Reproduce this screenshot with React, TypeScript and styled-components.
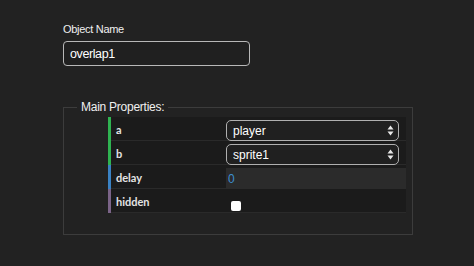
import React from 'react';
import styled, { createGlobalStyle } from 'styled-components';

const GlobalStyle = createGlobalStyle`
  html, body {
    margin: 0;
    padding: 0;
    background: #222222;
  }
  body {
    font-family: 'Liberation Sans', Arial, sans-serif;
    color: #eeeeee;
  }
`;

const Page = styled.div`
  width: 474px;
  height: 266px;
  box-sizing: border-box;
  padding: 22px 0 0 63px;
  background: #222222;
  overflow: hidden;
`;

const FieldLabel = styled.div`
  font-size: 11px;
  line-height: 15px;
  letter-spacing: -0.3px;
  color: #f0f0f0;
  margin-bottom: 4px;
`;

const NameInput = styled.input`
  display: block;
  box-sizing: border-box;
  width: 187px;
  height: 25px;
  margin: 0;
  padding: 0 6px;
  border: 1px solid #b8b8b8;
  border-radius: 4px;
  background: #202020;
  color: #ffffff;
  font-family: 'Liberation Sans', Arial, sans-serif;
  font-size: 12.5px;
  letter-spacing: -0.4px;
  outline: none;
`;

const Group = styled.fieldset`
  box-sizing: border-box;
  width: 350px;
  margin: 33px 0 0 0;
  padding: 2px 6px 21px 13px;
  border: 1px solid #3c3c3c;
`;

const Legend = styled.legend`
  padding: 0 4px;
  font-size: 12px;
  line-height: 16px;
  letter-spacing: -0.25px;
  color: #f0f0f0;
`;

const Rows = styled.div`
  display: flex;
  flex-direction: column;
  margin-left: 31px;
`;

const Row = styled.div<{ $accent: string }>`
  display: grid;
  grid-template-columns: 115px 1fr;
  align-items: center;
  height: 24px;
  box-sizing: border-box;
  border-left: 3px solid ${({ $accent }) => $accent};
  background:
    linear-gradient(to top, #2a2a2a 0, #2a2a2a 1px, transparent 1px),
    #1b1b1b;
`;

const RowLabel = styled.div`
  padding-left: 5px;
  font-family: Lato, 'Open Sans', sans-serif;
  font-weight: 700;
  font-size: 11px;
  color: #e4e4e4;
`;

const SelectWrap = styled.div`
  position: relative;
  align-self: end;
  width: 173px;
  height: 21px;
`;

const Select = styled.select`
  appearance: none;
  -webkit-appearance: none;
  box-sizing: border-box;
  width: 100%;
  height: 100%;
  margin: 0;
  padding: 0 6px;
  border: 1px solid #b0b0b0;
  border-radius: 5px;
  background: #202020;
  color: #ffffff;
  font-family: 'Liberation Sans', Arial, sans-serif;
  font-size: 12px;
  outline: none;
`;

const Arrows = styled.svg`
  position: absolute;
  right: 5px;
  top: 5px;
  pointer-events: none;
`;

const NumberInput = styled.input`
  align-self: end;
  box-sizing: border-box;
  width: 100%;
  height: 21px;
  margin: 0;
  padding: 0 2px;
  border: none;
  background: #2b2b2b;
  color: #3d8fd1;
  font-family: 'Liberation Sans', Arial, sans-serif;
  font-size: 12px;
  outline: none;
`;

const CheckCell = styled.div`
  align-self: stretch;
  display: flex;
  align-items: flex-start;
  padding: 12px 0 0 5px;
`;

const Check = styled.input`
  appearance: none;
  -webkit-appearance: none;
  width: 10px;
  height: 10px;
  margin: 0;
  border: none;
  border-radius: 2px;
  background: #ffffff;
`;

const SelectField: React.FC<{ value: string }> = ({ value }) => (
  <SelectWrap>
    <Select defaultValue={value}>
      <option>{value}</option>
    </Select>
    <Arrows width="7" height="11" viewBox="0 0 7 11">
      <path d="M3.5 0.5 L6.5 4.5 L0.5 4.5 Z" fill="#e8e8e8" />
      <path d="M3.5 10.5 L6.5 6.5 L0.5 6.5 Z" fill="#e8e8e8" />
    </Arrows>
  </SelectWrap>
);

export default function App() {
  return (
    <Page>
      <GlobalStyle />
      <FieldLabel>Object Name</FieldLabel>
      <NameInput defaultValue="overlap1" />
      <Group>
        <Legend>Main Properties:</Legend>
        <Rows>
          <Row $accent="#2fb351">
            <RowLabel>a</RowLabel>
            <SelectField value="player" />
          </Row>
          <Row $accent="#2fb351">
            <RowLabel>b</RowLabel>
            <SelectField value="sprite1" />
          </Row>
          <Row $accent="#3a82c4">
            <RowLabel>delay</RowLabel>
            <NumberInput defaultValue="0" />
          </Row>
          <Row $accent="#7b6488">
            <RowLabel>hidden</RowLabel>
            <CheckCell>
              <Check type="checkbox" />
            </CheckCell>
          </Row>
        </Rows>
      </Group>
    </Page>
  );
}
